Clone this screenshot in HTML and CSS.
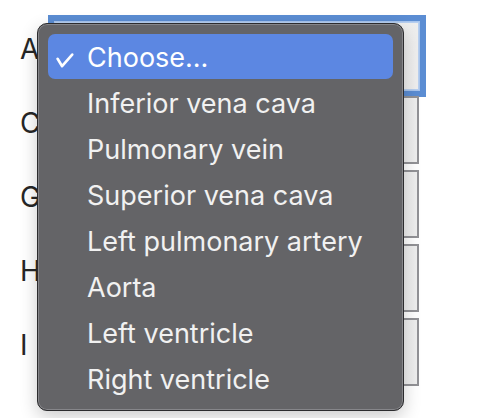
FILE: index.html
```html
<!DOCTYPE html>
<html>
<head>
<meta charset="utf-8">
<link rel="stylesheet" href="styles.css">
</head>
<body>
<div class="form">
  <div class="row"><span class="lbl">A</span><div class="box focus"></div></div>
  <div class="row"><span class="lbl">C</span><div class="box"></div></div>
  <div class="row"><span class="lbl">G</span><div class="box"></div></div>
  <div class="row"><span class="lbl">H</span><div class="box"></div></div>
  <div class="row"><span class="lbl">I</span><div class="box"></div></div>
</div>
<div class="menu">
  <div class="item sel"><svg class="check" width="18" height="15" viewBox="0 0 18 15"><path d="M1.6 5.8 L6.1 13.2 L16.2 1.6" fill="none" stroke="#ffffff" stroke-width="2.6" stroke-linecap="round" stroke-linejoin="round"/></svg><span>Choose...</span></div>
  <div class="item"><span>Inferior vena cava</span></div>
  <div class="item"><span>Pulmonary vein</span></div>
  <div class="item"><span>Superior vena cava</span></div>
  <div class="item"><span>Left pulmonary artery</span></div>
  <div class="item"><span>Aorta</span></div>
  <div class="item"><span>Left ventricle</span></div>
  <div class="item"><span>Right ventricle</span></div>
</div>
</body>
</html>
```
FILE: styles.css
```css
html, body {
  margin: 0;
  padding: 0;
  background: #ffffff;
}
body {
  width: 498px;
  height: 418px;
  overflow: hidden;
  position: relative;
  font-family: Inter, "Noto Sans", "Liberation Sans", sans-serif;
}
.form {
  padding-top: 22px;
  display: flex;
  flex-direction: column;
  gap: 6px;
}
.row {
  display: flex;
  height: 68px;
}
.lbl {
  width: 55px;
  box-sizing: border-box;
  padding-left: 20px;
  margin-top: 13px;
  font-size: 28px;
  line-height: 28px;
  color: #262626;
}
.box {
  width: 364px;
  box-sizing: border-box;
  border: 2px solid #929296;
  background: linear-gradient(90deg, #ffffff, #eeeeee);
}
.box.focus {
  border: 1px solid #b7cff0;
  box-shadow: 0 0 0 1px #a8c5ee, 0 0 0 7px #5b8dd3;
}
.menu {
  position: absolute;
  left: 37px;
  top: 23px;
  width: 367px;
  height: 388px;
  box-sizing: border-box;
  padding: 10px 10px;
  background: #646467;
  border: 1px solid #2c2c2e;
  border-radius: 10px;
  box-shadow: inset 0 0 0 1px #86868a, 0 6px 18px rgba(0, 0, 0, 0.2);
}
.item {
  height: 46px;
  display: flex;
  align-items: center;
  padding-left: 39px;
  font-size: 27px;
  color: #f1f1f1;
  white-space: nowrap;
}
.item span {
  line-height: 46px;
  margin-top: 2px;
}
.item.sel {
  height: 45px;
  margin-bottom: 1px;
  padding-left: 8px;
  background: #5c87e2;
  border-radius: 7px;
  color: #ffffff;
}
.check {
  margin-top: 8px;
  margin-right: 13px;
  flex: none;
}
```
